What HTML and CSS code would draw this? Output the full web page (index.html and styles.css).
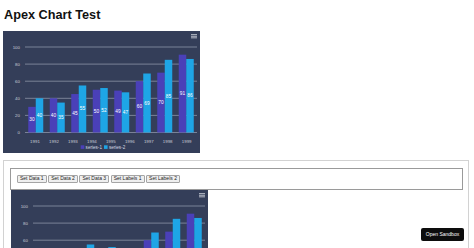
FILE: index.html
```html
<!DOCTYPE html>
<html lang="en">
<head>
<meta charset="utf-8">
<title>Apex Chart Test</title>
<link rel="stylesheet" href="styles.css">
</head>
<body>
<div class="page">
  <h1 class="title">Apex Chart Test</h1>
  <svg class="chart" viewBox="0 0 197 122" xmlns="http://www.w3.org/2000/svg">
    <g class="grid">
      <line x1="22" y1="16" x2="194" y2="16"/>
      <line x1="22" y1="33.1" x2="194" y2="33.1"/>
      <line x1="22" y1="50.2" x2="194" y2="50.2"/>
      <line x1="22" y1="67.3" x2="194" y2="67.3"/>
      <line x1="22" y1="84.4" x2="194" y2="84.4"/>
      <line x1="22" y1="101.5" x2="194" y2="101.5"/>
    </g>
    <g class="ylab">
      <text x="17" y="16">100</text>
      <text x="17" y="33.1">80</text>
      <text x="17" y="50.2">60</text>
      <text x="17" y="67.3">40</text>
      <text x="17" y="84.4">20</text>
      <text x="17" y="101.5">0</text>
    </g>
    <g class="s1">
      <rect x="25.25" y="75.85" width="7.5" height="25.65"/>
      <rect x="46.75" y="67.3" width="7.5" height="34.2"/>
      <rect x="68.25" y="63.03" width="7.5" height="38.47"/>
      <rect x="89.75" y="58.75" width="7.5" height="42.75"/>
      <rect x="111.25" y="59.61" width="7.5" height="41.89"/>
      <rect x="132.75" y="50.2" width="7.5" height="51.3"/>
      <rect x="154.25" y="41.65" width="7.5" height="59.85"/>
      <rect x="175.75" y="23.7" width="7.5" height="77.8"/>
    </g>
    <g class="s2">
      <rect x="32.75" y="67.3" width="7.5" height="34.2"/>
      <rect x="54.25" y="71.58" width="7.5" height="29.92"/>
      <rect x="75.75" y="54.48" width="7.5" height="47.02"/>
      <rect x="97.25" y="57.04" width="7.5" height="44.46"/>
      <rect x="118.75" y="61.32" width="7.5" height="40.18"/>
      <rect x="140.25" y="42.51" width="7.5" height="58.99"/>
      <rect x="161.75" y="28.83" width="7.5" height="72.67"/>
      <rect x="183.25" y="27.97" width="7.5" height="73.53"/>
    </g>
    <g class="dlab">
      <text x="29" y="88.68">30</text>
      <text x="50.5" y="84.4">40</text>
      <text x="72" y="82.26">45</text>
      <text x="93.5" y="80.13">50</text>
      <text x="115" y="80.55">49</text>
      <text x="136.5" y="75.85">60</text>
      <text x="158" y="71.58">70</text>
      <text x="179.5" y="62.6">91</text>
      <text x="36.5" y="84.4">40</text>
      <text x="58" y="86.54">35</text>
      <text x="79.5" y="77.99">55</text>
      <text x="101" y="79.27">52</text>
      <text x="122.5" y="81.41">47</text>
      <text x="144" y="72">69</text>
      <text x="165.5" y="65.16">85</text>
      <text x="187" y="64.74">86</text>
    </g>
    <g class="xlab">
      <text x="32" y="110.7">1991</text>
      <text x="50.96" y="110.7">1992</text>
      <text x="69.9" y="110.7">1993</text>
      <text x="88.9" y="110.7">1994</text>
      <text x="107.8" y="110.7">1995</text>
      <text x="126.8" y="110.7">1996</text>
      <text x="145.8" y="110.7">1997</text>
      <text x="164.7" y="110.7">1998</text>
      <text x="183.7" y="110.7">1999</text>
    </g>
    <g class="legend">
      <rect class="m1" x="77.7" y="114.3" width="3.6" height="3.6"/>
      <text x="82.6" y="116.1">series-1</text>
      <rect class="m2" x="101" y="114.3" width="3.6" height="3.6"/>
      <text x="105.9" y="116.1">series-2</text>
    </g>
    <g class="menu">
      <rect x="188" y="3.2" width="6" height="0.9"/>
      <rect x="188" y="4.8" width="6" height="0.9"/>
      <rect x="188" y="6.4" width="6" height="0.9"/>
    </g>
  </svg>

  <div class="sandbox">
    <div class="controls">
      <button class="btn">Set Data 1</button>
      <button class="btn">Set Data 2</button>
      <button class="btn">Set Data 3</button>
      <button class="btn">Set Labels 1</button>
      <button class="btn">Set Labels 2</button>
    </div>
    <svg class="chart chart-2" viewBox="0 0 197 122" xmlns="http://www.w3.org/2000/svg">
      <g class="grid">
        <line x1="22" y1="16" x2="194" y2="16"/>
        <line x1="22" y1="33.1" x2="194" y2="33.1"/>
        <line x1="22" y1="50.2" x2="194" y2="50.2"/>
        <line x1="22" y1="67.3" x2="194" y2="67.3"/>
        <line x1="22" y1="84.4" x2="194" y2="84.4"/>
        <line x1="22" y1="101.5" x2="194" y2="101.5"/>
      </g>
      <g class="ylab">
        <text x="17" y="16">100</text>
        <text x="17" y="33.1">80</text>
        <text x="17" y="50.2">60</text>
        <text x="17" y="67.3">40</text>
        <text x="17" y="84.4">20</text>
        <text x="17" y="101.5">0</text>
      </g>
      <g class="s1">
        <rect x="25.25" y="75.85" width="7.5" height="25.65"/>
        <rect x="46.75" y="67.3" width="7.5" height="34.2"/>
        <rect x="68.25" y="63.03" width="7.5" height="38.47"/>
        <rect x="89.75" y="58.75" width="7.5" height="42.75"/>
        <rect x="111.25" y="59.61" width="7.5" height="41.89"/>
        <rect x="132.75" y="50.2" width="7.5" height="51.3"/>
        <rect x="154.25" y="41.65" width="7.5" height="59.85"/>
        <rect x="175.75" y="23.7" width="7.5" height="77.8"/>
      </g>
      <g class="s2">
        <rect x="32.75" y="67.3" width="7.5" height="34.2"/>
        <rect x="54.25" y="71.58" width="7.5" height="29.92"/>
        <rect x="75.75" y="54.48" width="7.5" height="47.02"/>
        <rect x="97.25" y="57.04" width="7.5" height="44.46"/>
        <rect x="118.75" y="61.32" width="7.5" height="40.18"/>
        <rect x="140.25" y="42.51" width="7.5" height="58.99"/>
        <rect x="161.75" y="28.83" width="7.5" height="72.67"/>
        <rect x="183.25" y="27.97" width="7.5" height="73.53"/>
      </g>
      <g class="dlab">
        <text x="29" y="88.68">30</text>
        <text x="50.5" y="84.4">40</text>
        <text x="72" y="82.26">45</text>
        <text x="93.5" y="80.13">50</text>
        <text x="115" y="80.55">49</text>
        <text x="136.5" y="75.85">60</text>
        <text x="158" y="71.58">70</text>
        <text x="179.5" y="62.6">91</text>
        <text x="36.5" y="84.4">40</text>
        <text x="58" y="86.54">35</text>
        <text x="79.5" y="77.99">55</text>
        <text x="101" y="79.27">52</text>
        <text x="122.5" y="81.41">47</text>
        <text x="144" y="72">69</text>
        <text x="165.5" y="65.16">85</text>
        <text x="187" y="64.74">86</text>
      </g>
      <g class="xlab">
        <text x="32" y="110.7">1991</text>
        <text x="50.96" y="110.7">1992</text>
        <text x="69.9" y="110.7">1993</text>
        <text x="88.9" y="110.7">1994</text>
        <text x="107.8" y="110.7">1995</text>
        <text x="126.8" y="110.7">1996</text>
        <text x="145.8" y="110.7">1997</text>
        <text x="164.7" y="110.7">1998</text>
        <text x="183.7" y="110.7">1999</text>
      </g>
      <g class="legend">
        <rect class="m1" x="77.7" y="114.3" width="3.6" height="3.6"/>
        <text x="82.6" y="116.1">series-1</text>
        <rect class="m2" x="101" y="114.3" width="3.6" height="3.6"/>
        <text x="105.9" y="116.1">series-2</text>
      </g>
      <g class="menu">
        <rect x="188" y="3.2" width="6" height="0.9"/>
        <rect x="188" y="4.8" width="6" height="0.9"/>
        <rect x="188" y="6.4" width="6" height="0.9"/>
      </g>
    </svg>
  </div>
</div>
<button class="open-sandbox">Open Sandbox</button>
</body>
</html>
```
FILE: styles.css
```css
html, body {
  margin: 0;
  padding: 0;
  background: #ffffff;
  overflow: hidden;
  font-family: "Liberation Sans", Arial, sans-serif;
}

.page {
  padding: 0 5px 0 3px;
}

.title {
  margin: 8px 0 8px 1px;
  font-size: 12.7px;
  line-height: 15px;
  font-weight: bold;
  color: #111111;
}

.chart {
  display: block;
  width: 197px;
  height: 122px;
  background: #343e59;
  font-family: "Liberation Sans", Arial, sans-serif;
}

.grid line {
  stroke: #9aa1b1;
  stroke-width: 0.7;
}

.ylab text {
  font-size: 4.4px;
  fill: #c9ccd6;
  text-anchor: end;
  dominant-baseline: central;
}

.xlab text {
  font-size: 4.4px;
  fill: #c9ccd6;
  text-anchor: middle;
  dominant-baseline: central;
}

.s1 rect, .legend .m1 {
  fill: #4a40b8;
}

.s2 rect, .legend .m2 {
  fill: #1ea5e6;
}

.dlab text {
  font-size: 4.8px;
  fill: #ffffff;
  text-anchor: middle;
  dominant-baseline: central;
}

.legend text {
  font-size: 4.6px;
  fill: #d6d9e2;
  dominant-baseline: central;
}

.menu rect {
  fill: #c3c7d1;
}

.sandbox {
  margin-top: 6.5px;
  border: 1px solid #d2d2d2;
  padding: 7px 5px 0 6px;
}

.controls {
  display: flex;
  gap: 1.6px;
  border: 1px solid #9a9a9a;
  padding: 6px 6px 6px;
}

.btn {
  box-sizing: border-box;
  height: 8px;
  margin: 0;
  padding: 0 2px;
  font-family: "Liberation Sans", Arial, sans-serif;
  font-size: 5px;
  line-height: 1;
  color: #222222;
  background: #efefef;
  border: 1px solid #a5a5a5;
  border-radius: 1px;
}

.chart-2 {
  margin-left: 1px;
}

.open-sandbox {
  position: fixed;
  right: 10px;
  bottom: 7.5px;
  width: 43px;
  height: 13px;
  margin: 0;
  padding: 0;
  font-family: "Liberation Sans", Arial, sans-serif;
  font-size: 5px;
  line-height: 1;
  color: #ffffff;
  background: #0d0d0d;
  border: none;
  border-radius: 2px;
}
```
